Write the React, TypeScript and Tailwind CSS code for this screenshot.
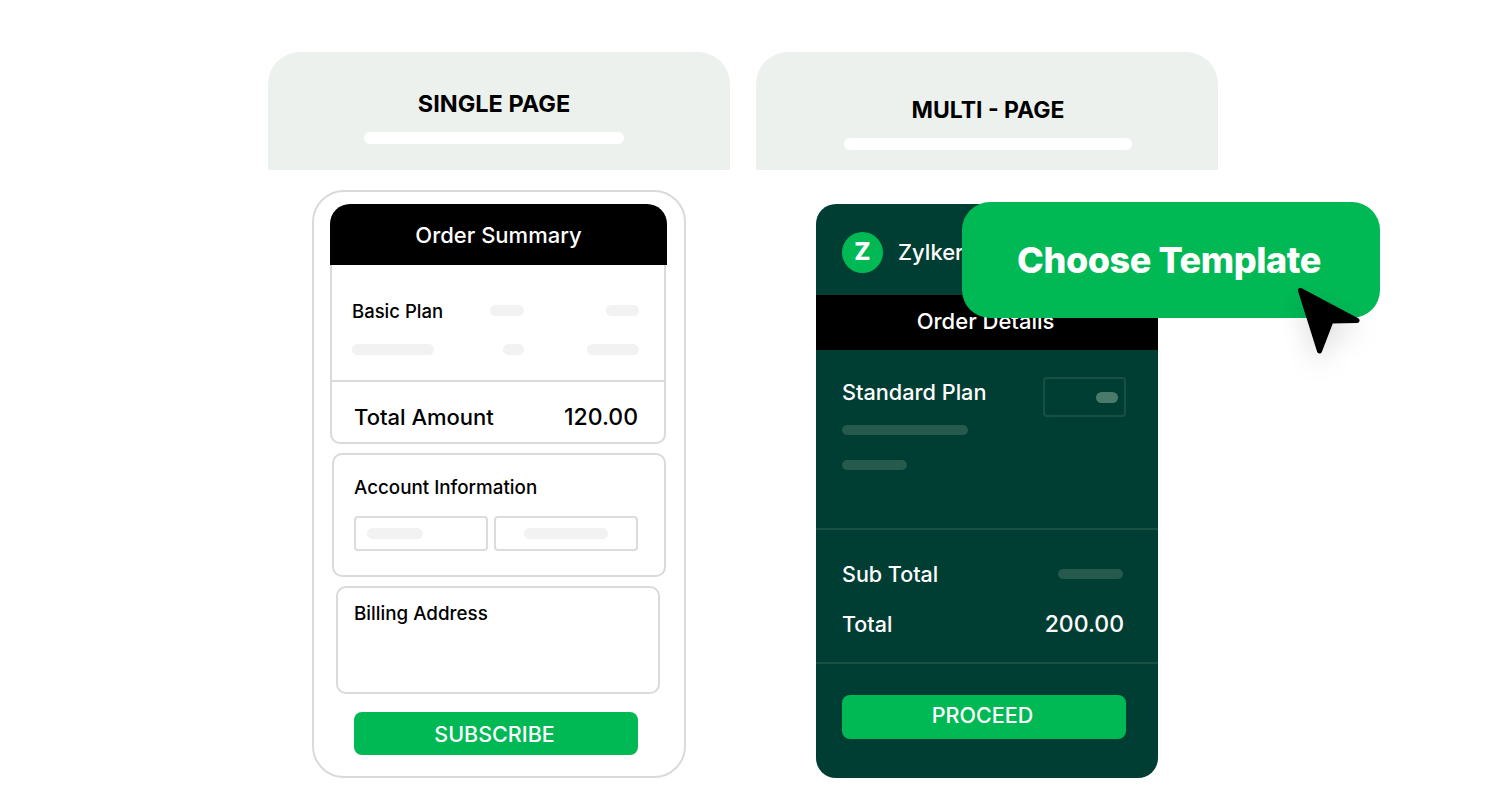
import type { ReactNode } from 'react';

function ColumnHeader({ title, barClass, titleClass }: { title: string; barClass: string; titleClass: string }) {
  return (
    <div className={`flex h-[118px] flex-col items-center rounded-t-[32px] bg-[#edf1ee] ${titleClass}`}>
      <h2 className="leading-[30px] font-bold text-black">{title}</h2>
      <div className={`mt-[13px] h-[12px] rounded-full bg-white ${barClass}`} />
    </div>
  );
}

function Pill({ className }: { className: string }) {
  return <div className={`h-[11px] rounded-full bg-[#f2f2f2] ${className}`} />;
}

function DarkBar({ className }: { className: string }) {
  return <div className={`h-[10px] rounded-full bg-[#265a4c] ${className}`} />;
}

function GreenButton({ children, className }: { children: ReactNode; className: string }) {
  return (
    <button className={`flex w-[284px] items-center justify-center rounded-[8px] bg-[#00b955] text-[21.5px] font-medium text-white ${className}`}>
      {children}
    </button>
  );
}

function SinglePage() {
  return (
    <div className="mt-[20px] ml-[44px] h-[588px] w-[374px] rounded-[32px] border-2 border-[#dadada] pt-[12px]">
      <div className="ml-[16px] flex h-[61px] w-[337px] items-center justify-center rounded-t-[20px] bg-black pt-[2px] text-[22px] font-medium text-white">
        Order Summary
      </div>
      <div className="ml-[16px] flex h-[179px] w-[336px] flex-col rounded-b-[10px] border-x-2 border-b-2 border-[#dadada]">
        <div className="h-[117px] border-b-2 border-[#dadada] pt-[40px] pr-[25px] pl-[20px]">
          <div className="flex h-[11px] items-center">
            <span className="w-[138px] pt-[2px] text-[18.5px] font-medium text-black">Basic Plan</span>
            <Pill className="w-[34px]" />
            <Pill className="ml-auto w-[33px]" />
          </div>
          <div className="mt-[28px] flex items-center">
            <Pill className="w-[82px]" />
            <Pill className="ml-[69px] w-[21px]" />
            <Pill className="ml-auto w-[52px]" />
          </div>
        </div>
        <div className="flex flex-1 items-center justify-between pt-[10px] pr-[26px] pl-[22px] text-[22px] font-medium text-black">
          <span>Total Amount</span>
          <span className="text-[23px]">120.00</span>
        </div>
      </div>
      <div className="mt-[9px] ml-[18px] h-[124px] w-[334px] rounded-[10px] border-2 border-[#dadada] pt-[20px] pl-[20px]">
        <div className="text-[18.8px] leading-[26px] font-medium text-black">Account Information</div>
        <div className="mt-[15px] flex gap-[6px]">
          <div className="flex h-[35px] w-[134px] items-center rounded-[4px] border-2 border-[#dcdcdc] pl-[11px]">
            <Pill className="w-[56px]" />
          </div>
          <div className="flex h-[35px] w-[144px] items-center justify-center rounded-[4px] border-2 border-[#dcdcdc]">
            <Pill className="w-[84px]" />
          </div>
        </div>
      </div>
      <div className="mt-[9px] ml-[22px] h-[108px] w-[324px] rounded-[10px] border-2 border-[#dadada] pt-[13px] pl-[16px]">
        <div className="text-[18.8px] leading-[26px] font-medium text-black">Billing Address</div>
      </div>
      <GreenButton className="mt-[18px] ml-[40px] h-[43px] pt-[2px] pr-[3px]">SUBSCRIBE</GreenButton>
    </div>
  );
}

function MultiPage() {
  return (
    <div className="mt-[34px] ml-[60px] flex h-[574px] w-[342px] flex-col rounded-[20px] bg-[#003d32] text-white">
      <div className="flex h-[91px] items-center gap-[15px] pt-[5px] pl-[26px]">
        <div className="flex h-[41px] w-[41px] items-center justify-center rounded-full bg-[#00b955] text-[24px] font-extrabold">Z</div>
        <span className="text-[22px] font-medium">Zylker</span>
      </div>
      <div className="flex h-[55px] items-center justify-center bg-black pr-[3px] pb-[3px] text-[22px] font-medium">Order Details</div>
      <div className="relative h-[180px] border-b-2 border-[#1a4f44] pt-[27px] pl-[26px]">
        <div className="text-[21.7px] leading-[30px] font-medium">Standard Plan</div>
        <DarkBar className="mt-[18px] w-[126px]" />
        <DarkBar className="mt-[25px] w-[65px]" />
        <div className="absolute top-[27px] left-[227px] flex h-[40px] w-[83px] items-center justify-end rounded-[4px] border-2 border-[#1a4f44] pr-[6px]">
          <div className="h-[11px] w-[22px] rounded-full bg-[#4a7a6a]" />
        </div>
      </div>
      <div className="h-[134px] border-b-2 border-[#1a4f44] pt-[29px] pr-[34px] pl-[26px] text-[21.5px] font-medium">
        <div className="flex h-[30px] items-center justify-between">
          <span>Sub Total</span>
          <DarkBar className="mr-[1px] w-[65px]" />
        </div>
        <div className="mt-[20px] flex h-[30px] items-center justify-between">
          <span>Total</span>
          <span className="text-[23px]">200.00</span>
        </div>
      </div>
      <GreenButton className="mt-[31px] ml-[26px] h-[44px] pr-[3px] pb-[3px]">PROCEED</GreenButton>
    </div>
  );
}

function TemplateCallout() {
  return (
    <div className="absolute top-[202px] left-[962px] h-[116px] w-[418px]">
      <div className="flex h-full items-center justify-center rounded-[28px] bg-[#00b955] pr-[4px] text-[36px] font-extrabold tracking-[-0.012em] text-white">
        Choose Template
      </div>
      <svg
        className="absolute top-[80px] left-[330px] h-[80px] w-[76px] drop-shadow-[0_10px_12px_rgba(0,0,0,0.13)]"
        viewBox="0 0 76 80"
        fill="none"
      >
        <path
          d="M8.5 8.5 L65 38.5 L39 39 L27.5 69 Z"
          fill="#000"
          stroke="#000"
          strokeWidth="5"
          strokeLinejoin="round"
        />
      </svg>
    </div>
  );
}

export default function App() {
  return (
    <div className="relative flex h-[810px] w-[1510px] gap-[26px] overflow-hidden bg-white pt-[52px] pl-[268px] font-['Inter',sans-serif]">
      <div className="w-[462px]">
        <ColumnHeader title="SINGLE PAGE" barClass="w-[260px]" titleClass="pt-[37px] pr-[10px] text-[23.5px]" />
        <SinglePage />
      </div>
      <div className="w-[462px]">
        <ColumnHeader title="MULTI - PAGE" barClass="w-[288px]" titleClass="pt-[43px] pl-[2px] text-[23px]" />
        <MultiPage />
      </div>
      <TemplateCallout />
    </div>
  );
}
